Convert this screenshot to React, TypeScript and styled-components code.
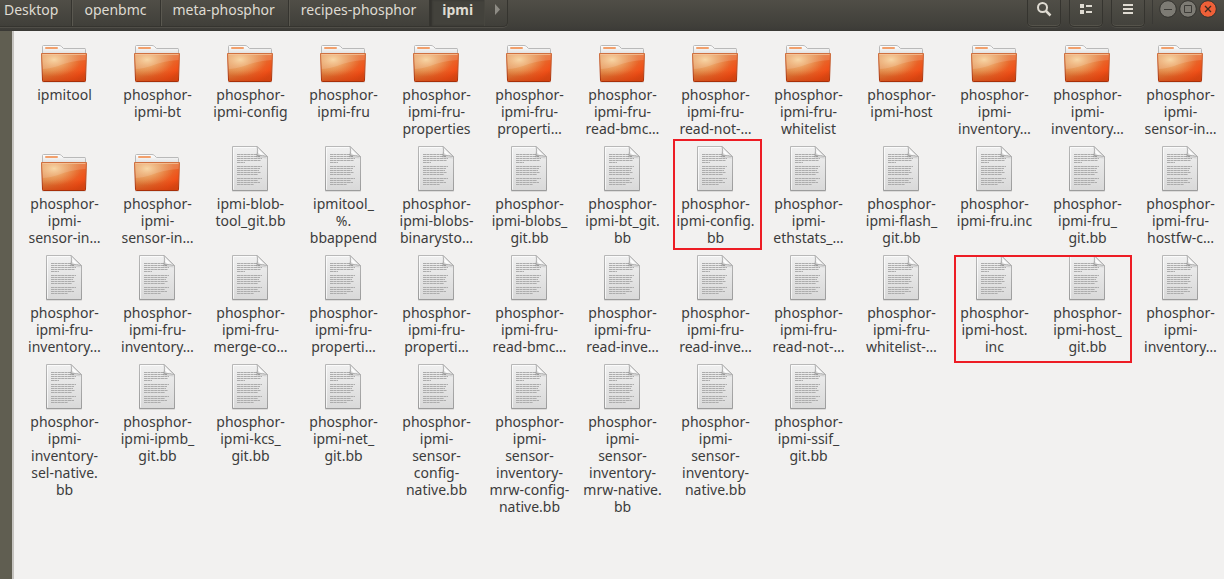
import React from 'react';
import styled, { createGlobalStyle, css } from 'styled-components';

const Global = createGlobalStyle`
  * { box-sizing: border-box; }
  body {
    margin: 0;
    background: #f2f1f0;
    color: #3c3c3c;
    font: 14px/17px "Noto Sans", "Open Sans", sans-serif;
    overflow: hidden;
  }
  button { font: inherit; color: inherit; padding: 0; margin: 0; border: 0; background: none; }
`;

const Window = styled.div`
  display: flex;
  flex-direction: column;
  min-height: 100vh;
`;

const HeaderBar = styled.header`
  display: flex;
  align-items: flex-start;
  height: 31px;
  background: linear-gradient(#504e47, #403f3a 26px, #3c3b37);
  border-bottom: 1px solid #3a3935;
  color: #dfdbd2;
`;

const PathBar = styled.nav`
  display: flex;
  height: 27px;
  border-bottom: 1px solid #35342f;
  border-right: 1px solid #35342f;
  border-radius: 0 0 5px 0;
  box-shadow: 0 1px 0 #504e48;
`;

const Crumb = styled.a<{ $current?: boolean }>`
  display: flex;
  padding: 1px 13px 0 12px;
  color: inherit;
  text-decoration: none;
  white-space: nowrap;
  border-right: 1px solid #35342f;
  box-shadow: inset 1px 0 0 #5a5850;
  &:first-child { padding-left: 4px; box-shadow: none; }
  ${p => p.$current && css`
    padding-right: 11px;
    font-weight: 700;
    background: #43423c;
    border-right-color: #47463f;
    box-shadow: inset 2px 0 2px #33322e;
  `}
`;

const CrumbNext = styled.button`
  display: flex;
  width: 22px;
  padding: 4px 0 0 9px;
`;

const Tools = styled.div`
  display: flex;
  gap: 8px;
  margin-left: auto;
  padding-right: 7px;
`;

const ToolButton = styled.button`
  display: flex;
  justify-content: center;
  width: 34px;
  height: 27px;
  border: 1px solid #35342f;
  border-top: 0;
  border-radius: 0 0 5px 5px;
  background: linear-gradient(#504e47, #43423c);
  box-shadow: inset 0 -1px 0 #55534b, 0 1px 0 #4c4b45;
`;

const WindowControls = styled.div`
  display: flex;
  gap: 2px;
  height: 24px;
  padding: 0 7px 0 6px;
  border-left: 1px solid #3a3935;
`;

const ControlButton = styled.button`
  display: flex;
  width: 18px;
  height: 18px;
`;

const Body = styled.div`
  display: flex;
  flex: 1;
`;

const Sidebar = styled.aside`
  width: 14px;
  background: #605e51;
  border-right: 2px solid #c5c3bf;
`;

const Files = styled.main`
  flex: 1;
  display: grid;
  grid-template-columns: repeat(auto-fill, 81px);
  align-content: start;
  gap: 8px 12px;
  padding: 5px 0 0 10px;
`;

const Item = styled.div`
  position: relative;
  display: flex;
  flex-direction: column;
  align-items: center;
  gap: 2px;
`;

const Label = styled.span`
  display: flex;
  flex-direction: column;
  align-items: center;
  white-space: nowrap;
`;

const Highlight = styled.div<{ $wide?: boolean }>`
  position: absolute;
  z-index: 1;
  border: 2px solid #ed1c24;
  left: ${p => (p.$wide ? 0 : -2)}px;
  top: ${p => (p.$wide ? 1 : -6)}px;
  width: ${p => (p.$wide ? 178 : 89)}px;
  height: ${p => (p.$wide ? 108 : 111)}px;
`;

const HiddenDefs = styled.svg`
  position: absolute;
`;

const Defs = () => (
  <HiddenDefs width="0" height="0" aria-hidden="true">
    <defs>
      <linearGradient id="front" x1="0" y1="0" x2="1" y2="0.7">
        <stop offset="0" stopColor="#e0935a" />
        <stop offset="0.45" stopColor="#df8240" />
        <stop offset="0.9" stopColor="#f05018" />
        <stop offset="1" stopColor="#e04a15" />
      </linearGradient>
      <radialGradient id="glow" cx="0.28" cy="0.22" r="0.6">
        <stop offset="0" stopColor="#f8d49c" stopOpacity="0.95" />
        <stop offset="1" stopColor="#f0a060" stopOpacity="0" />
      </radialGradient>
      <linearGradient id="shade" x1="0" y1="0" x2="0" y2="1">
        <stop offset="0.6" stopColor="#c83c0c" stopOpacity="0" />
        <stop offset="1" stopColor="#c83c0c" stopOpacity="0.65" />
      </linearGradient>
      <linearGradient id="edge" x1="0" y1="0" x2="0" y2="1">
        <stop offset="0" stopColor="#cf7040" />
        <stop offset="1" stopColor="#a82f08" />
      </linearGradient>
      <linearGradient id="back" x1="0" y1="0" x2="0" y2="1">
        <stop offset="0" stopColor="#ffffff" />
        <stop offset="1" stopColor="#d8d8d8" />
      </linearGradient>
      <linearGradient id="page" x1="0" y1="0" x2="0" y2="1">
        <stop offset="0" stopColor="#f0f0f0" />
        <stop offset="1" stopColor="#d9d9d9" />
      </linearGradient>
      <linearGradient id="pageEdge" x1="0" y1="0" x2="0" y2="1">
        <stop offset="0" stopColor="#b8b8b8" />
        <stop offset="1" stopColor="#9c9c9c" />
      </linearGradient>
      <linearGradient id="fold" x1="0.1" y1="0.9" x2="0.7" y2="0.3">
        <stop offset="0" stopColor="#b0b0b0" />
        <stop offset="0.35" stopColor="#ffffff" />
        <stop offset="0.65" stopColor="#f4f4f4" />
        <stop offset="1" stopColor="#b8b8b8" />
      </linearGradient>
    </defs>
  </HiddenDefs>
);

const FolderIcon = () => (
  <svg width="49" height="48" viewBox="0 0 49 48" aria-hidden="true">
    <rect x="2" y="44" width="44" height="3" rx="1.5" fill="#000" opacity="0.08" />
    <path d="M2.500 20V10.500Q2.500 9.500 3.500 9.500H19Q20.500 9.500 21.500 10.500L23.500 12.500H45Q45.500 12.500 45.500 13.500V20Z" fill="url(#back)" stroke="#b9b9b9" />
    <rect x="5" y="11" width="13" height="2" rx="1" fill="#f2a06c" />
    <path d="M1.500 17.500H46.500L45.500 44.500Q45.500 45.500 44.500 45.500H3.500Q2.500 45.500 2.500 44.500Z" fill="url(#front)" />
    <path d="M1.500 17.500H46.500L45.500 45.500H2.500Z" fill="url(#shade)" />
    <path d="M1.500 17.500H46.500L45.500 45.500H2.500Z" fill="url(#glow)" />
    <path d="M2 18H46L45.700 24Q30 25 18 30Q9 33 2.500 33Z" fill="#fff" opacity="0.14" />
    <path d="M2.500 18.500H45.500" stroke="#f8c8a0" opacity="0.7" />
    <path d="M1.500 17.500H46.500L45.500 44.500Q45.500 45.500 44.500 45.500H3.500Q2.500 45.500 2.500 44.500Z" fill="none" stroke="url(#edge)" />
  </svg>
);

const FileIcon = () => (
  <svg width="49" height="48" viewBox="0 0 49 48" aria-hidden="true">
    <rect x="6" y="45" width="36" height="2" rx="1" fill="#000" opacity="0.09" />
    <path d="M6.500 1.500H31L41.500 11.500V45.500H6.500Z" fill="url(#page)" stroke="url(#pageEdge)" />
    <path d="M7.500 44.500V2.500H31" fill="none" stroke="#fff" opacity="0.7" />
    <g stroke="#acacac" strokeDasharray="3 0.4">
      <path d="M11 9.500H31M11 11.500H34M11 13.500H36M11 15.500H35M11 17.500H19" />
      <path d="M11 21.500H36M11 23.500H34M11 25.500H33M11 27.500H35M11 29.500H32" />
      <path d="M11 33.500H36M11 35.500H32M11 37.500H34M11 39.500H28" />
    </g>
    <path d="M31 3L30 12.500L41 13.500Z" fill="#000" opacity="0.1" />
    <path d="M31 1.500Q32.500 6 31 10.500Q37 9.500 41.500 12Z" fill="url(#fold)" stroke="#a4a4a4" strokeWidth="0.8" />
  </svg>
);

const folders: string[] = [
  'ipmitool',
  'phosphor-|ipmi-bt',
  'phosphor-|ipmi-config',
  'phosphor-|ipmi-fru',
  'phosphor-|ipmi-fru-|properties',
  'phosphor-|ipmi-fru-|properti…',
  'phosphor-|ipmi-fru-|read-bmc…',
  'phosphor-|ipmi-fru-|read-not-…',
  'phosphor-|ipmi-fru-|whitelist',
  'phosphor-|ipmi-host',
  'phosphor-|ipmi-|inventory…',
  'phosphor-|ipmi-|inventory…',
  'phosphor-|ipmi-|sensor-in…',
  'phosphor-|ipmi-|sensor-in…',
  'phosphor-|ipmi-|sensor-in…',
];

const files: string[] = [
  'ipmi-blob-|tool_git.bb',
  'ipmitool_|%.|bbappend',
  'phosphor-|ipmi-blobs-|binarysto…',
  'phosphor-|ipmi-blobs_|git.bb',
  'phosphor-|ipmi-bt_git.|bb',
  'phosphor-|ipmi-config.|bb',
  'phosphor-|ipmi-|ethstats_…',
  'phosphor-|ipmi-flash_|git.bb',
  'phosphor-|ipmi-fru.inc',
  'phosphor-|ipmi-fru_|git.bb',
  'phosphor-|ipmi-fru-|hostfw-c…',
  'phosphor-|ipmi-fru-|inventory…',
  'phosphor-|ipmi-fru-|inventory…',
  'phosphor-|ipmi-fru-|merge-co…',
  'phosphor-|ipmi-fru-|properti…',
  'phosphor-|ipmi-fru-|properti…',
  'phosphor-|ipmi-fru-|read-bmc…',
  'phosphor-|ipmi-fru-|read-inve…',
  'phosphor-|ipmi-fru-|read-inve…',
  'phosphor-|ipmi-fru-|read-not-…',
  'phosphor-|ipmi-fru-|whitelist-…',
  'phosphor-|ipmi-host.|inc',
  'phosphor-|ipmi-host_|git.bb',
  'phosphor-|ipmi-|inventory…',
  'phosphor-|ipmi-|inventory-|sel-native.|bb',
  'phosphor-|ipmi-ipmb_|git.bb',
  'phosphor-|ipmi-kcs_|git.bb',
  'phosphor-|ipmi-net_|git.bb',
  'phosphor-|ipmi-|sensor-|config-|native.bb',
  'phosphor-|ipmi-|sensor-|inventory-|mrw-config-|native.bb',
  'phosphor-|ipmi-|sensor-|inventory-|mrw-native.|bb',
  'phosphor-|ipmi-|sensor-|inventory-|native.bb',
  'phosphor-|ipmi-ssif_|git.bb',
];

const Entry = ({ name, folder }: { name: string; folder?: boolean }) => (
  <Item>
    {folder ? <FolderIcon /> : <FileIcon />}
    <Label>{name.split('|').map((line, i) => <span key={i}>{line}</span>)}</Label>
    {name === 'phosphor-|ipmi-config.|bb' && <Highlight />}
    {name === 'phosphor-|ipmi-host.|inc' && <Highlight $wide />}
  </Item>
);

export default function App() {
  return (
    <>
      <Global />
      <Defs />
      <Window>
        <HeaderBar>
          <PathBar aria-label="Path">
            <Crumb href="#desktop">Desktop</Crumb>
            <Crumb href="#openbmc">openbmc</Crumb>
            <Crumb href="#meta-phosphor">meta-phosphor</Crumb>
            <Crumb href="#recipes-phosphor">recipes-phosphor</Crumb>
            <Crumb href="#ipmi" $current aria-current="page">ipmi</Crumb>
            <CrumbNext aria-label="Next folder">
              <svg width="8" height="11" viewBox="0 0 8 11"><path d="M1 0L6 5.500L1 11Z" fill="#8e8c85" /></svg>
            </CrumbNext>
          </PathBar>
          <Tools>
            <ToolButton aria-label="Search">
              <svg width="16" height="18" viewBox="0 0 16 18" fill="none" stroke="#dfdbd2">
                <circle cx="6.500" cy="7.500" r="4.500" strokeWidth="2" />
                <path d="M10 11L14.500 15.500" strokeWidth="2.500" />
              </svg>
            </ToolButton>
            <ToolButton aria-label="View as list">
              <svg width="14" height="18" viewBox="0 0 14 18" fill="#dfdbd2">
                <path d="M1 4h4v4H1zM1 10h4v4H1zM7 5h6v2H7zM7 11h6v2H7z" />
              </svg>
            </ToolButton>
            <ToolButton aria-label="Menu">
              <svg width="12" height="18" viewBox="0 0 12 18" fill="#dfdbd2">
                <path d="M1 4h10v2H1zM1 8h10v2H1zM1 12h10v2H1z" />
              </svg>
            </ToolButton>
          </Tools>
          <WindowControls>
            <ControlButton aria-label="Minimize">
              <svg width="18" height="18" viewBox="0 0 18 18">
                <circle cx="9" cy="9" r="8.300" fill="#7d7b74" stroke="#33322e" />
                <path d="M5 9.500h8" stroke="#3c3b37" />
              </svg>
            </ControlButton>
            <ControlButton aria-label="Maximize">
              <svg width="18" height="18" viewBox="0 0 18 18">
                <circle cx="9" cy="9" r="8.300" fill="#7d7b74" stroke="#33322e" />
                <path d="M5.500 5.500h7v7h-7z" fill="none" stroke="#3c3b37" />
              </svg>
            </ControlButton>
            <ControlButton aria-label="Close">
              <svg width="18" height="18" viewBox="0 0 18 18">
                <circle cx="9" cy="9" r="8.300" fill="#ee6038" stroke="#33322e" />
                <path d="M6 6l6 6M12 6l-6 6" stroke="#3c2a20" strokeWidth="1.300" />
              </svg>
            </ControlButton>
          </WindowControls>
        </HeaderBar>
        <Body>
          <Sidebar />
          <Files>
            {folders.map((name, i) => <Entry key={`d${i}`} name={name} folder />)}
            {files.map((name, i) => <Entry key={`f${i}`} name={name} />)}
          </Files>
        </Body>
      </Window>
    </>
  );
}
